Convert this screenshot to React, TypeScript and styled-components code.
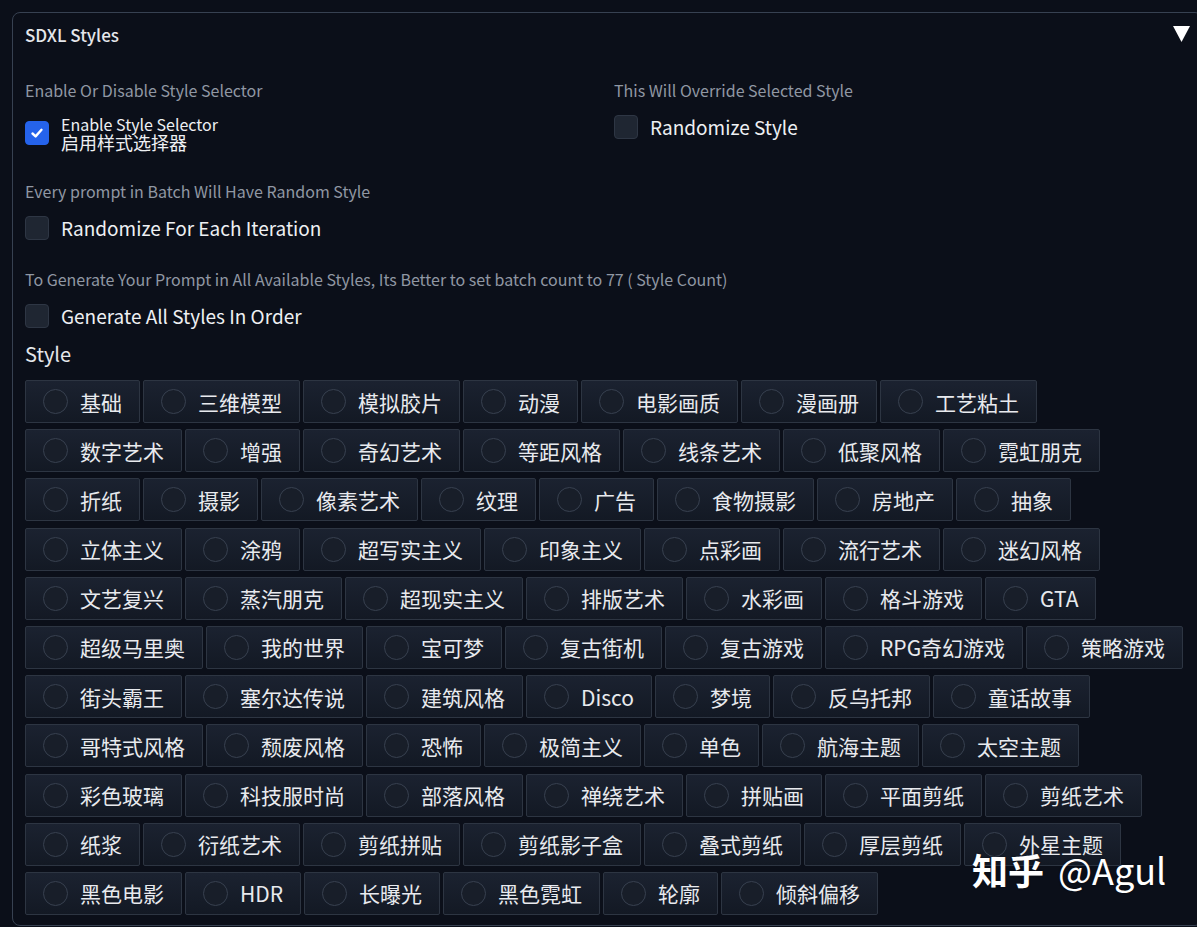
import React from 'react';
import styled, { createGlobalStyle } from 'styled-components';

const Global = createGlobalStyle`
  html, body { margin: 0; padding: 0; background: #0b0f19; overflow: hidden; }
  body { font-family: "Noto Sans CJK SC", "Noto Sans", sans-serif; color: #e5e7eb; }
  * { box-sizing: border-box; }
`;

const Page = styled.div`
  position: relative;
  width: 1197px;
  height: 927px;
  padding: 12px 0 0 12px;
  overflow: hidden;
`;

const Panel = styled.section`
  width: 1191px;
  border: 1px solid #374151;
  border-radius: 8px;
  padding: 0 12px 10px;
  display: flex;
  flex-direction: column;
`;

const Header = styled.div`
  height: 42px;
  display: flex;
  align-items: center;
  justify-content: space-between;
`;

const Title = styled.span`
  font-size: 17px;
  font-weight: 500;
  color: #e5e7eb;
`;

const TwoCols = styled.div`
  display: grid;
  grid-template-columns: 1fr 1fr;
  column-gap: 13px;
  margin-top: 24px;
  align-items: start;
`;

const Field = styled.div<{ $mt?: number }>`
  display: flex;
  flex-direction: column;
  margin-top: ${p => p.$mt ?? 0}px;
`;

const Info = styled.div`
  font-size: 16px;
  line-height: 22px;
  color: #9097a3;
  margin-bottom: 14px;
`;

const CheckRow = styled.label`
  display: flex;
  align-items: center;
  gap: 12px;
  min-height: 24px;
`;

const Box = styled.span<{ $checked?: boolean }>`
  width: 24px;
  height: 24px;
  flex: none;
  border-radius: 4px;
  display: flex;
  align-items: center;
  justify-content: center;
  background: ${p => (p.$checked ? '#2563eb' : '#1f2632')};
  border: 1px solid ${p => (p.$checked ? '#2563eb' : '#2e3644')};
`;

const LabelText = styled.span`
  font-size: 19px;
  line-height: 24px;
  color: #eef0f3;
`;

const LabelStack = styled.span`
  display: flex;
  flex-direction: column;
  color: #eef0f3;
`;

const LabelLine = styled.span<{ $size: number }>`
  font-size: ${p => p.$size}px;
  line-height: 18px;
`;

const StyleLabel = styled.div`
  font-size: 20px;
  line-height: 24px;
  color: #e5e7eb;
  margin-top: 14px;
`;

const ChipGrid = styled.div`
  display: flex;
  flex-wrap: wrap;
  gap: 6.2px 3px;
  margin-top: 14px;
`;

const Chip = styled.label`
  display: inline-flex;
  align-items: center;
  gap: 12px;
  height: 43px;
  padding: 0 17px;
  border: 1px solid #2d3542;
  border-radius: 2px;
  background: linear-gradient(to top, #131924, #1b2230);
  font-size: 21px;
  color: #e8eaee;
  white-space: nowrap;
`;

const Radio = styled.span`
  width: 25px;
  height: 25px;
  flex: none;
  border-radius: 50%;
  border: 1px solid #384150;
  background: #181e29;
`;

const Watermark = styled.div`
  position: absolute;
  left: 972px;
  top: 845px;
  font-size: 36px;
  line-height: 48px;
  color: #ffffff;
  white-space: nowrap;
  text-shadow: 0 0 2px rgba(0, 0, 0, 0.4);
`;

const WmBold = styled.span`
  font-weight: 700;
  margin-right: 14px;
`;

const styles = [
  '基础', '三维模型', '模拟胶片', '动漫', '电影画质', '漫画册', '工艺粘土',
  '数字艺术', '增强', '奇幻艺术', '等距风格', '线条艺术', '低聚风格', '霓虹朋克',
  '折纸', '摄影', '像素艺术', '纹理', '广告', '食物摄影', '房地产', '抽象',
  '立体主义', '涂鸦', '超写实主义', '印象主义', '点彩画', '流行艺术', '迷幻风格',
  '文艺复兴', '蒸汽朋克', '超现实主义', '排版艺术', '水彩画', '格斗游戏', 'GTA',
  '超级马里奥', '我的世界', '宝可梦', '复古街机', '复古游戏', 'RPG奇幻游戏', '策略游戏',
  '街头霸王', '塞尔达传说', '建筑风格', 'Disco', '梦境', '反乌托邦', '童话故事',
  '哥特式风格', '颓废风格', '恐怖', '极简主义', '单色', '航海主题', '太空主题',
  '彩色玻璃', '科技服时尚', '部落风格', '禅绕艺术', '拼贴画', '平面剪纸', '剪纸艺术',
  '纸浆', '衍纸艺术', '剪纸拼贴', '剪纸影子盒', '叠式剪纸', '厚层剪纸', '外星主题',
  '黑色电影', 'HDR', '长曝光', '黑色霓虹', '轮廓', '倾斜偏移',
];

const Check = () => (
  <svg width="16" height="16" viewBox="0 0 16 16">
    <path d="M3.5 8.5 L6.6 11.4 L12.5 4.8" fill="none" stroke="#fff" strokeWidth="2.4" strokeLinecap="round" strokeLinejoin="round" />
  </svg>
);

const Caret = () => (
  <svg width="17" height="16" viewBox="0 0 17 16">
    <polygon points="0,0 17,0 8.5,16" fill="#fff" />
  </svg>
);

export default function App() {
  return (
    <Page>
      <Global />
      <Panel>
        <Header>
          <Title>SDXL Styles</Title>
          <Caret />
        </Header>
        <TwoCols>
          <Field>
            <Info>Enable Or Disable Style Selector</Info>
            <CheckRow>
              <Box $checked><Check /></Box>
              <LabelStack>
                <LabelLine $size={16}>Enable Style Selector</LabelLine>
                <LabelLine $size={18}>启用样式选择器</LabelLine>
              </LabelStack>
            </CheckRow>
          </Field>
          <Field>
            <Info>This Will Override Selected Style</Info>
            <CheckRow>
              <Box />
              <LabelText>Randomize Style</LabelText>
            </CheckRow>
          </Field>
        </TwoCols>
        <Field $mt={29}>
          <Info>Every prompt in Batch Will Have Random Style</Info>
          <CheckRow>
            <Box />
            <LabelText>Randomize For Each Iteration</LabelText>
          </CheckRow>
        </Field>
        <Field $mt={28}>
          <Info>To Generate Your Prompt in All Available Styles, Its Better to set batch count to 77 ( Style Count)</Info>
          <CheckRow>
            <Box />
            <LabelText>Generate All Styles In Order</LabelText>
          </CheckRow>
        </Field>
        <StyleLabel>Style</StyleLabel>
        <ChipGrid>
          {styles.map(s => (
            <Chip key={s}>
              <Radio />
              <span>{s}</span>
            </Chip>
          ))}
        </ChipGrid>
      </Panel>
      <Watermark>
        <WmBold>知乎</WmBold>@Agul
      </Watermark>
    </Page>
  );
}
